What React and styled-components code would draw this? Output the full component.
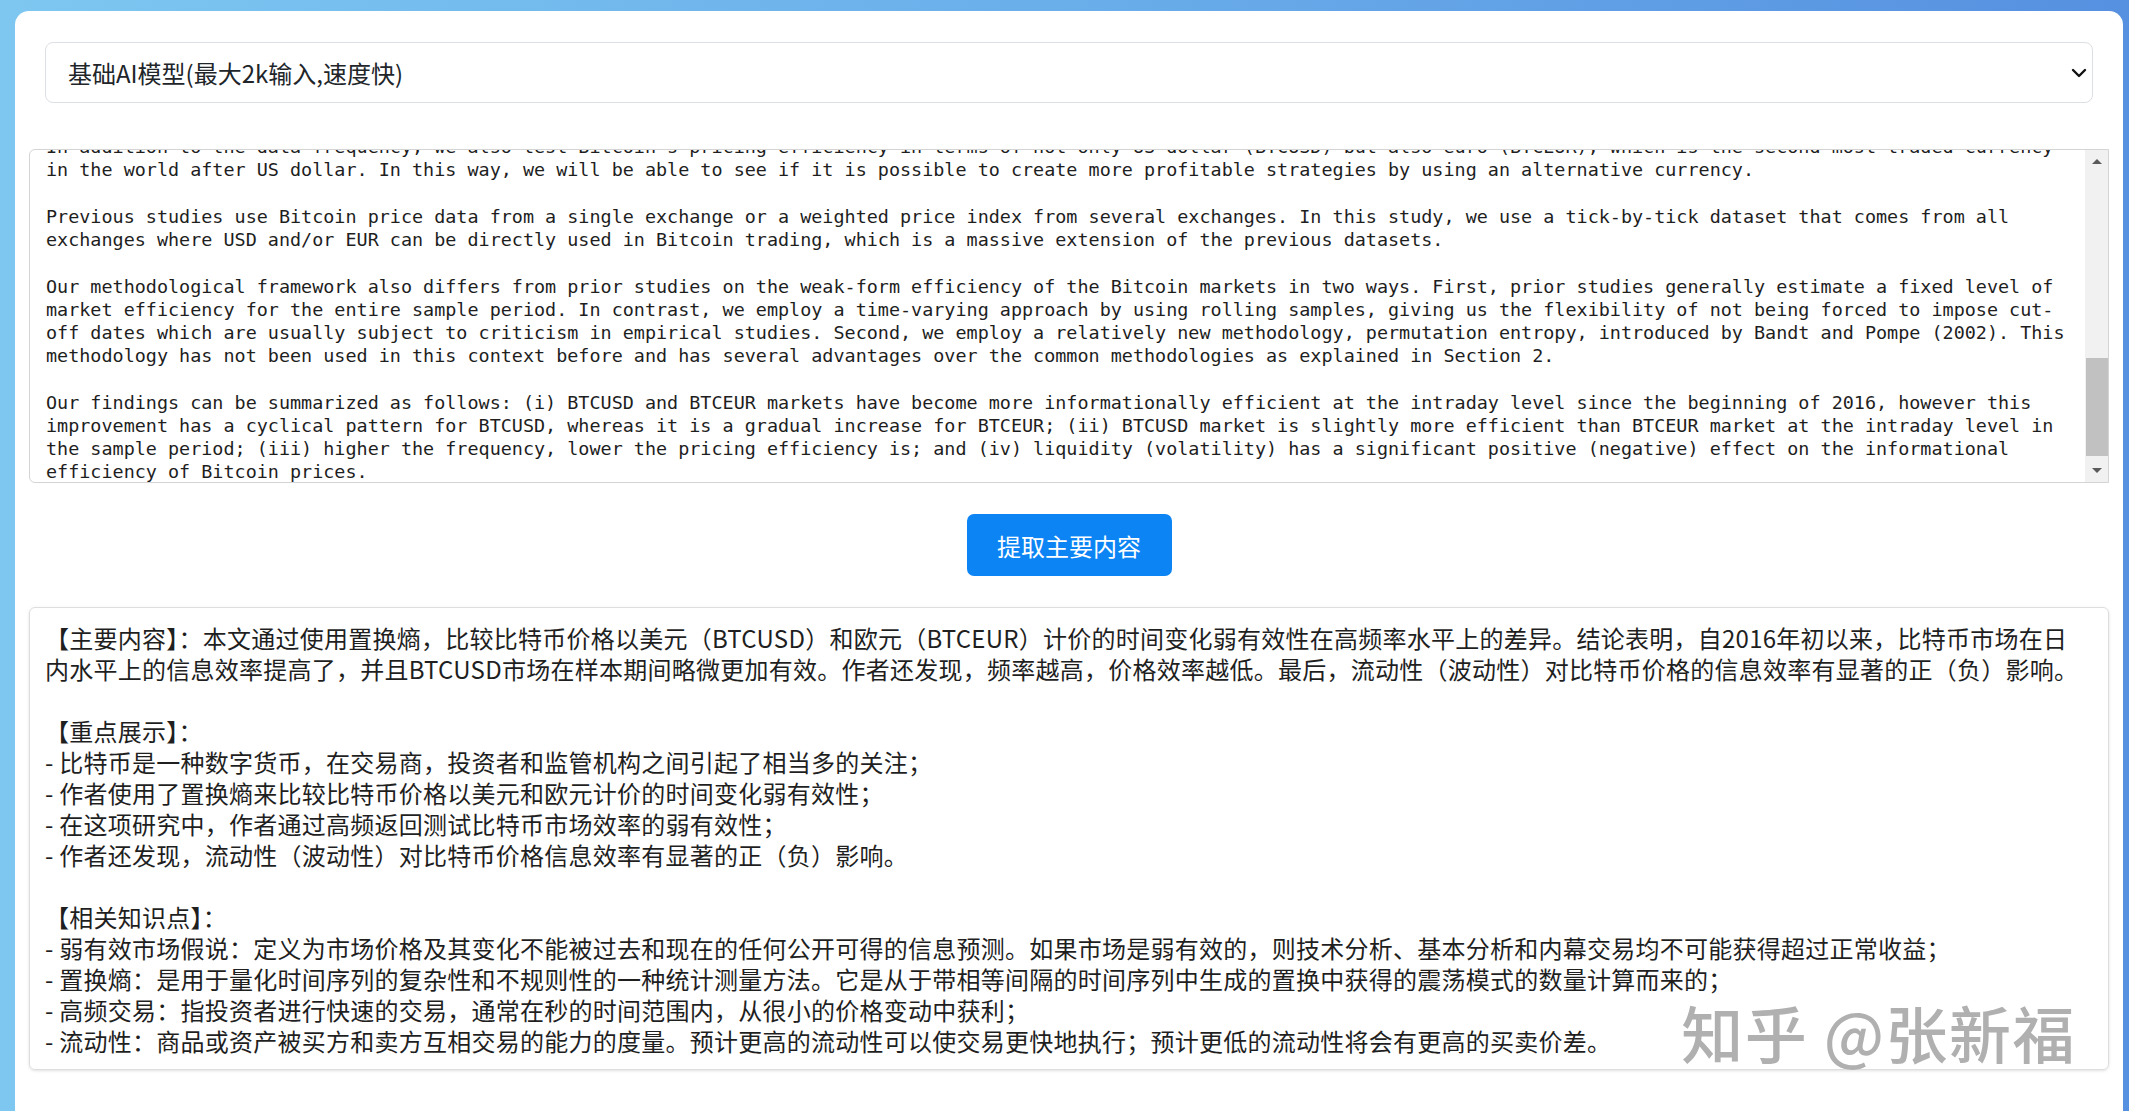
import { useLayoutEffect, useRef, useState } from 'react';
import styled, { createGlobalStyle } from 'styled-components';

const GlobalStyle = createGlobalStyle`
  html, body {
    margin: 0;
    min-height: 100%;
  }
  body {
    background: linear-gradient(90deg, #7dc7f1 0%, #6aaeea 50%, #5690e0 100%);
    font-family: "Noto Sans CJK SC", "Noto Sans", sans-serif;
    overflow: hidden;
  }
`;

// Styled Components
const Page = styled.div`
  padding: 11px 6px 0 15px;
`;

const Card = styled.div`
  background: #fff;
  border-radius: 14px 14px 0 0;
  padding: 31px 14px 40px;
  min-height: 1100px;
  box-sizing: border-box;
`;

const SelectWrap = styled.div`
  position: relative;
  margin: 0 16px;
`;

const ModelSelect = styled.select`
  display: block;
  width: 100%;
  height: 61px;
  appearance: none;
  border: 1px solid #dcdfe3;
  border-radius: 8px;
  background: #fff;
  padding: 0 50px 0 22px;
  font-family: "Noto Sans CJK SC", "Noto Sans", sans-serif;
  font-size: 24px;
  color: #212529;
  outline: none;
`;

const Chevron = styled.svg`
  position: absolute;
  right: 6px;
  top: 50%;
  transform: translateY(-50%);
  pointer-events: none;
`;

const EditorFrame = styled.div`
  position: relative;
  margin-top: 46px;
`;

const Editor = styled.textarea`
  display: block;
  box-sizing: border-box;
  width: 100%;
  height: 334px;
  margin: 0;
  border: 1px solid #d4d4d4;
  border-radius: 6px 0 0 6px;
  padding: 8px 30px 8px 16px;
  font-family: "DejaVu Sans Mono", "Liberation Mono", monospace;
  font-size: 18.43px;
  line-height: 23.2px;
  color: #1e1e1e;
  white-space: pre;
  overflow: hidden;
  resize: none;
  outline: none;
`;

const ScrollRail = styled.div`
  position: absolute;
  top: 1px;
  right: 1px;
  bottom: 1px;
  width: 23px;
  background: #f1f1f1;
  display: flex;
  flex-direction: column;
`;

const ArrowButton = styled.div`
  flex: none;
  height: 23px;
  display: flex;
  align-items: center;
  justify-content: center;

  &::before {
    content: "";
    border-left: 5px solid transparent;
    border-right: 5px solid transparent;
    ${({ $dir }) =>
      $dir === 'up'
        ? 'border-bottom: 5px solid #5a5a5a;'
        : 'border-top: 5px solid #5a5a5a;'}
  }
`;

const Track = styled.div`
  flex: 1;
  position: relative;
`;

const Thumb = styled.div`
  position: absolute;
  left: 1px;
  right: 0;
  background: #c1c1c1;
`;

const ActionRow = styled.div`
  display: flex;
  justify-content: center;
  padding: 31px 0;
`;

const PrimaryButton = styled.button`
  width: 205px;
  height: 62px;
  border: none;
  border-radius: 7px;
  background: #0c84f4;
  color: #fff;
  font-family: "Noto Sans CJK SC", "Noto Sans", sans-serif;
  font-size: 24px;
  cursor: pointer;
`;

const ResultBox = styled.div`
  position: relative;
  border: 1px solid #dedede;
  border-radius: 6px;
  box-shadow: 0 1px 3px rgba(0, 0, 0, 0.12);
  padding: 14px 15px 13px;
  font-size: 24px;
  line-height: 31px;
  letter-spacing: 0.25px;
  color: #1f1f1f;
`;

const ResultLine = styled.div`
  white-space: nowrap;
  min-height: 31px;
`;

const Watermark = styled.div`
  position: absolute;
  right: 32px;
  bottom: 6px;
  font-size: 62px;
  line-height: 1;
  font-weight: 500;
  color: #b0b0b0;
  letter-spacing: 1.5px;
  pointer-events: none;
  text-shadow: 0 0 1px #fff;
`;

const sourceLines = [
  'The inefficiency of Bitcoin revisited: A high-frequency analysis with alternative currencies',
  '',
  'Abstract',
  'Using permutation entropy, this paper compares the time-varying weak-form efficiency of Bitcoin prices in terms of US dollars (BTCUSD) and euro (BTCEUR) at a high-frequency level.',
  'We find that BTCUSD and BTCEUR markets have become more informationally efficient at the intraday level since the beginning of 2016, and BTCUSD market is slightly more efficient',
  'than BTCEUR market in the sample period. We also find that higher the frequency, lower the pricing efficiency is. Finally, liquidity (volatility) has a significant positive',
  '(negative) effect on the informational efficiency of Bitcoin prices.',
  '',
  'Keywords: Bitcoin; Cryptocurrency; Market efficiency; Permutation entropy; High-frequency data',
  '',
  '1. Introduction',
  '',
  'Bitcoin is a digital currency that has attracted considerable attention from traders, investors and regulators since its introduction. Unlike traditional currencies, it is',
  'not issued by a central authority, and its transactions are recorded in a public ledger that is maintained by a decentralized network of participants.',
  '',
  'A growing body of literature examines whether Bitcoin markets are informationally efficient. Most of these studies test the weak-form efficiency of Bitcoin prices using',
  'daily data and conclude that the market is inefficient, although it tends to become more efficient over time.',
  '',
  'In this paper, we revisit the efficiency of Bitcoin markets in several ways. First, we use high-frequency data, which allows us to examine the efficiency at the intraday',
  'level. Since high-frequency trading has become an important part of financial markets, the speed at which new information is incorporated into prices is of particular',
  'interest for traders and investors.',
  '',
  'We consider several sampling frequencies ranging from 15 seconds to 60 minutes, which allows us to investigate how the pricing efficiency changes with the frequency of',
  'the data. This is also important since the choice of the sampling frequency may affect the conclusions drawn from the efficiency tests, as shown in the recent',
  'literature.',
  '',
  "In addition to the data frequency, we also test Bitcoin's pricing efficiency in terms of not only US dollar (BTCUSD) but also euro (BTCEUR), which is the second most traded currency",
  'in the world after US dollar. In this way, we will be able to see if it is possible to create more profitable strategies by using an alternative currency.',
  '',
  'Previous studies use Bitcoin price data from a single exchange or a weighted price index from several exchanges. In this study, we use a tick-by-tick dataset that comes from all',
  'exchanges where USD and/or EUR can be directly used in Bitcoin trading, which is a massive extension of the previous datasets.',
  '',
  'Our methodological framework also differs from prior studies on the weak-form efficiency of the Bitcoin markets in two ways. First, prior studies generally estimate a fixed level of',
  'market efficiency for the entire sample period. In contrast, we employ a time-varying approach by using rolling samples, giving us the flexibility of not being forced to impose cut-',
  'off dates which are usually subject to criticism in empirical studies. Second, we employ a relatively new methodology, permutation entropy, introduced by Bandt and Pompe (2002). This',
  'methodology has not been used in this context before and has several advantages over the common methodologies as explained in Section 2.',
  '',
  'Our findings can be summarized as follows: (i) BTCUSD and BTCEUR markets have become more informationally efficient at the intraday level since the beginning of 2016, however this',
  'improvement has a cyclical pattern for BTCUSD, whereas it is a gradual increase for BTCEUR; (ii) BTCUSD market is slightly more efficient than BTCEUR market at the intraday level in',
  'the sample period; (iii) higher the frequency, lower the pricing efficiency is; and (iv) liquidity (volatility) has a significant positive (negative) effect on the informational',
  'efficiency of Bitcoin prices.',
];

const resultLines = [
  '【主要内容】：本文通过使用置换熵，比较比特币价格以美元（BTCUSD）和欧元（BTCEUR）计价的时间变化弱有效性在高频率水平上的差异。结论表明，自2016年初以来，比特币市场在日',
  '内水平上的信息效率提高了，并且BTCUSD市场在样本期间略微更加有效。作者还发现，频率越高，价格效率越低。最后，流动性（波动性）对比特币价格的信息效率有显著的正（负）影响。',
  '',
  '【重点展示】：',
  '- 比特币是一种数字货币，在交易商，投资者和监管机构之间引起了相当多的关注；',
  '- 作者使用了置换熵来比较比特币价格以美元和欧元计价的时间变化弱有效性；',
  '- 在这项研究中，作者通过高频返回测试比特币市场效率的弱有效性；',
  '- 作者还发现，流动性（波动性）对比特币价格信息效率有显著的正（负）影响。',
  '',
  '【相关知识点】：',
  '- 弱有效市场假说：定义为市场价格及其变化不能被过去和现在的任何公开可得的信息预测。如果市场是弱有效的，则技术分析、基本分析和内幕交易均不可能获得超过正常收益；',
  '- 置换熵：是用于量化时间序列的复杂性和不规则性的一种统计测量方法。它是从于带相等间隔的时间序列中生成的置换中获得的震荡模式的数量计算而来的；',
  '- 高频交易：指投资者进行快速的交易，通常在秒的时间范围内，从很小的价格变动中获利；',
  '- 流动性：商品或资产被买方和卖方互相交易的能力的度量。预计更高的流动性可以使交易更快地执行；预计更低的流动性将会有更高的买卖价差。',
];

const LINE_HEIGHT = 23.2;
// index of the paragraph line that should sit first in view
const FIRST_VISIBLE = 27;

export default function App() {
  const editorRef = useRef(null);
  const trackRef = useRef(null);
  const [thumb, setThumb] = useState({ top: 0, height: 0 });

  useLayoutEffect(() => {
    const el = editorRef.current;
    const track = trackRef.current;
    if (!el || !track) return;
    el.scrollTop = FIRST_VISIBLE * LINE_HEIGHT - 0.4;

    const trackH = track.clientHeight;
    const height = Math.max(20, (trackH * el.clientHeight) / el.scrollHeight);
    const maxScroll = el.scrollHeight - el.clientHeight;
    const top = maxScroll > 0 ? ((trackH - height) * el.scrollTop) / maxScroll : 0;
    setThumb({ top, height });
  }, []);

  return (
    <>
      <GlobalStyle />
      <Page>
        <Card>
          <SelectWrap>
            <ModelSelect defaultValue="basic">
              <option value="basic">基础AI模型(最大2k输入,速度快)</option>
              <option value="pro">高级AI模型(最大8k输入)</option>
            </ModelSelect>
            <Chevron width="16" height="10" viewBox="0 0 16 10">
              <path d="M2 2l6 6 6-6" fill="none" stroke="#111" strokeWidth="2.4" strokeLinecap="round" strokeLinejoin="round" />
            </Chevron>
          </SelectWrap>

          <EditorFrame>
            <Editor ref={editorRef} wrap="off" defaultValue={sourceLines.join('\n')} spellCheck={false} />
            <ScrollRail>
              <ArrowButton $dir="up" />
              <Track ref={trackRef}>
                <Thumb style={{ top: thumb.top, height: thumb.height }} />
              </Track>
              <ArrowButton $dir="down" />
            </ScrollRail>
          </EditorFrame>

          <ActionRow>
            <PrimaryButton type="button">提取主要内容</PrimaryButton>
          </ActionRow>

          <ResultBox>
            {resultLines.map((line, i) => (
              <ResultLine key={i}>{line}</ResultLine>
            ))}
            <Watermark>知乎 @张新福</Watermark>
          </ResultBox>
        </Card>
      </Page>
    </>
  );
}
